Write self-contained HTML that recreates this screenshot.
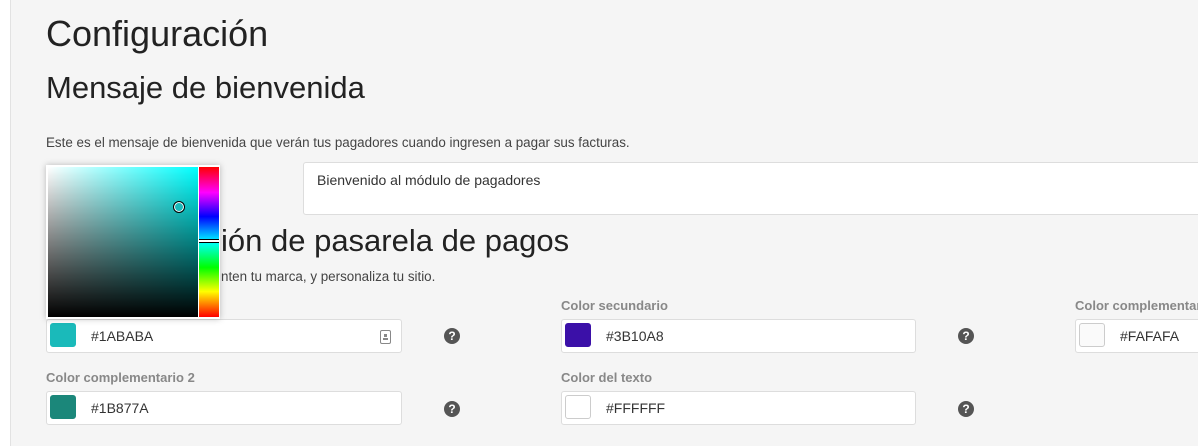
<!DOCTYPE html>
<html><head><meta charset="utf-8"><style>
body{margin:0;width:1198px;height:446px;overflow:hidden;background:#f5f5f5;font-family:"Liberation Sans",sans-serif;color:#222;position:relative}
.strip{position:absolute;left:0;top:0;width:10px;height:446px;background:#fff;border-right:1px solid #e2e2e2}
.a{position:absolute;white-space:nowrap}
.lbl{font-size:13px;font-weight:bold;color:#888}
.inp{position:absolute;height:32px;background:#fff;border:1px solid #ddd;border-radius:3px;box-sizing:border-box}
.sw{position:absolute;left:3px;top:3px;width:26px;height:24px;border-radius:3px;border:1px solid #ccc;box-sizing:border-box}
.val{position:absolute;left:44px;top:8px;font-size:14px;color:#333}
.q{position:absolute;width:16px;height:16px;border-radius:50%;background:#555;color:#fff;font-size:12px;font-weight:bold;text-align:center;line-height:16px}
</style></head><body>
<div class="strip"></div>
<div class="a" style="left:46px;top:13px;font-size:36px;color:#222;font-weight:300">Configuración</div>
<div class="a" style="left:46px;top:70px;font-size:31px">Mensaje de bienvenida</div>
<div class="a" style="left:46px;top:135px;font-size:13.4px;color:#444">Este es el mensaje de bienvenida que verán tus pagadores cuando ingresen a pagar sus facturas.</div>
<div class="inp" style="left:303px;top:162px;width:910px;height:53px"><div class="a" style="left:13px;top:9px;font-size:14px;color:#333">Bienvenido al módulo de pagadores</div></div>
<div class="a" style="left:221px;top:223px;font-size:31px">ión de pasarela de pagos</div>
<div class="a" style="left:221px;top:269px;font-size:13.4px;color:#444">nten tu marca, y personaliza tu sitio.</div>
<div class="a lbl" style="left:46px;top:298px">Color primario</div>
<div class="a lbl" style="left:561px;top:298px">Color secundario</div>
<div class="a lbl" style="left:1075px;top:298px">Color complementario 1</div>
<div class="a lbl" style="left:46px;top:370px">Color complementario 2</div>
<div class="a lbl" style="left:561px;top:370px">Color del texto</div>
<div class="inp" style="left:46px;top:319px;width:356px;height:34px"><div class="sw" style="background:#1ABABA;border-color:#1ABABA"></div><div class="val">#1ABABA</div>
<div style="position:absolute;left:333px;top:10px;width:9px;height:12px;border:1px solid #888;border-radius:2px"><div style="position:absolute;left:3px;top:3px;width:3px;height:3px;background:#888"></div><div style="position:absolute;left:2px;top:7px;width:5px;height:2px;background:#888"></div></div></div>
<div class="inp" style="left:561px;top:319px;width:355px;height:34px"><div class="sw" style="background:#3B10A8;border-color:#3B10A8"></div><div class="val">#3B10A8</div></div>
<div class="inp" style="left:1075px;top:319px;width:140px;height:34px"><div class="sw" style="background:#FAFAFA"></div><div class="val">#FAFAFA</div></div>
<div class="inp" style="left:46px;top:391px;width:356px;height:34px"><div class="sw" style="background:#1B877A;border-color:#1B877A"></div><div class="val">#1B877A</div></div>
<div class="inp" style="left:561px;top:391px;width:355px;height:34px"><div class="sw" style="background:#fff"></div><div class="val">#FFFFFF</div></div>
<div class="q" style="left:444px;top:328px">?</div>
<div class="q" style="left:958px;top:328px">?</div>
<div class="q" style="left:444px;top:401px">?</div>
<div class="q" style="left:958px;top:401px">?</div>
<div style="position:absolute;left:46px;top:165px;width:174px;height:154px;background:#fff;box-shadow:0 0 6px rgba(0,0,0,.25)">
<div style="position:absolute;left:2px;top:2px;width:150px;height:150px;background:linear-gradient(to bottom,rgba(0,0,0,0),#000),linear-gradient(to right,#fff,#0ff)"></div>
<div style="position:absolute;left:153px;top:2px;width:20px;height:150px;background:linear-gradient(to bottom,#f00 0%,#f0f 17%,#00f 33%,#0ff 50%,#0f0 67%,#ff0 83%,#f00 100%)"></div>
<div style="position:absolute;left:153px;top:74px;width:20px;height:2px;background:#fff;border-top:1px solid #000;border-bottom:1px solid #000"></div>
<div style="position:absolute;left:127px;top:36px;width:10px;height:10px;border-radius:50%;border:1.5px solid #000;box-shadow:inset 0 0 0 1px #fff;background:#1ABABA"></div>
</div>
</body></html>
